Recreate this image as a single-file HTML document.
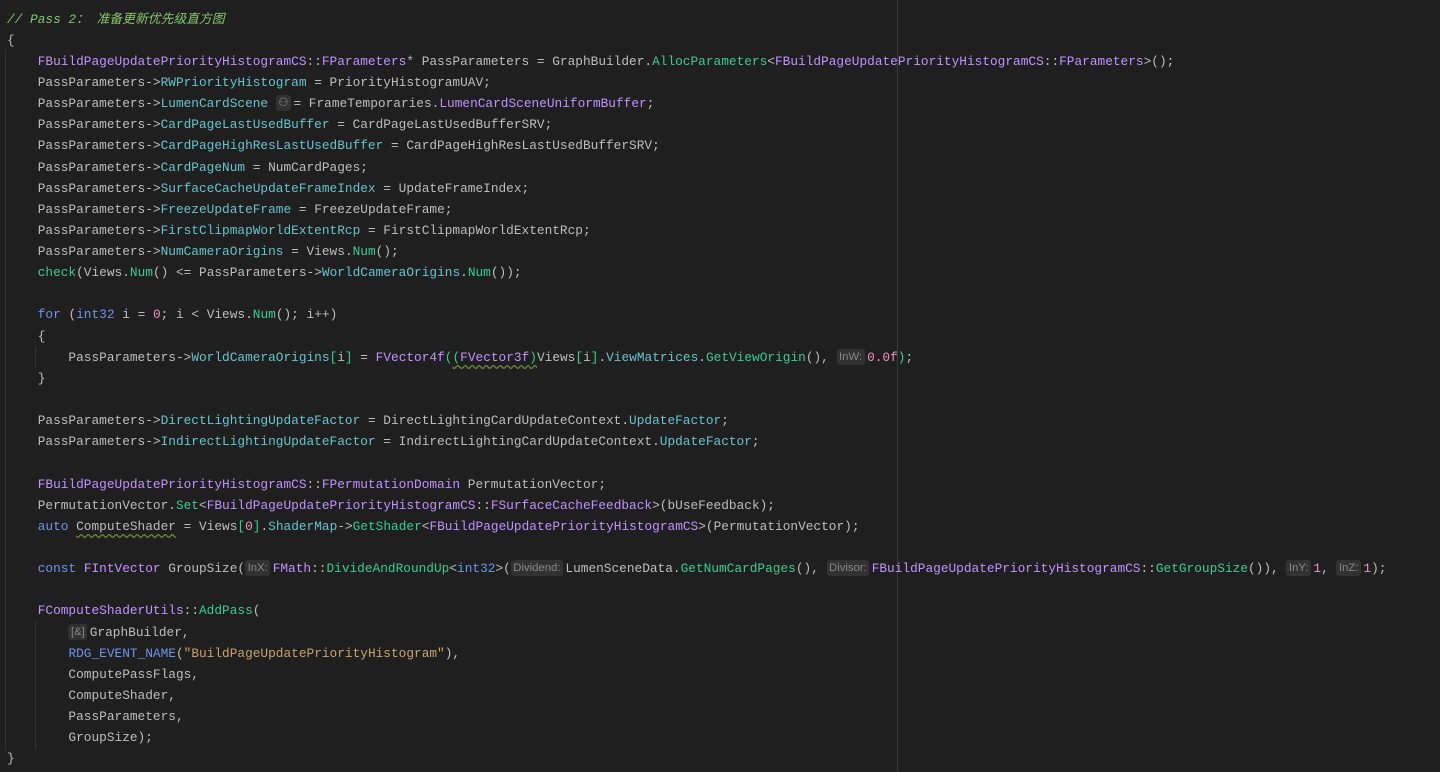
<!DOCTYPE html>
<html><head><meta charset="utf-8">
<style>
html,body{margin:0;padding:0;background:#1f1f1f;width:1440px;height:772px;overflow:hidden}
.ln{position:absolute;left:7px;height:21px;line-height:21px;white-space:pre;font-family:"Liberation Mono","Noto Sans CJK SC",monospace;font-size:12.8px;color:#bdbdbd}
.t{color:#c191ff}.f{color:#66c3cc}.m{color:#39cc8f}.k{color:#6c95eb}.n{color:#ed94c0}
.c{color:#85c46c;font-style:italic}.s{color:#c9a26d}
.h{display:inline-block;background:#323232;color:#888;font-family:"Liberation Sans",sans-serif;font-size:11.3px;line-height:16px;padding:0 2.5px;border-radius:3px;margin-right:2.5px;vertical-align:1px}
.u{text-decoration:underline wavy #6a8a3a;text-underline-offset:3px}
.g{position:absolute;width:1px;background:#333}
</style></head><body>
<div class="g" style="left:897px;top:0;height:772px;background:#3a3a3a"></div>
<div class="g" style="left:5px;top:50px;height:700px"></div>
<div class="g" style="left:35px;top:346px;height:22px"></div>
<div class="g" style="left:35px;top:622px;height:128px"></div>

<div class="ln" style="top:9px"><span class="c">// Pass 2： 准备更新优先级直方图</span></div>
<div class="ln" style="top:30px">{</div>
<div class="ln" style="top:51px">    <span class="t">FBuildPageUpdatePriorityHistogramCS</span>::<span class="t">FParameters</span>* PassParameters = GraphBuilder.<span class="m">AllocParameters</span>&lt;<span class="t">FBuildPageUpdatePriorityHistogramCS</span>::<span class="t">FParameters</span>&gt;();</div>
<div class="ln" style="top:72px">    PassParameters-&gt;<span class="f">RWPriorityHistogram</span> = PriorityHistogramUAV;</div>
<div class="ln" style="top:93px">    PassParameters-&gt;<span class="f">LumenCardScene</span> <span class="h">⚇</span>= FrameTemporaries.<span class="t">LumenCardSceneUniformBuffer</span>;</div>
<div class="ln" style="top:114px">    PassParameters-&gt;<span class="f">CardPageLastUsedBuffer</span> = CardPageLastUsedBufferSRV;</div>
<div class="ln" style="top:135px">    PassParameters-&gt;<span class="f">CardPageHighResLastUsedBuffer</span> = CardPageHighResLastUsedBufferSRV;</div>
<div class="ln" style="top:157px">    PassParameters-&gt;<span class="f">CardPageNum</span> = NumCardPages;</div>
<div class="ln" style="top:178px">    PassParameters-&gt;<span class="f">SurfaceCacheUpdateFrameIndex</span> = UpdateFrameIndex;</div>
<div class="ln" style="top:199px">    PassParameters-&gt;<span class="f">FreezeUpdateFrame</span> = FreezeUpdateFrame;</div>
<div class="ln" style="top:220px">    PassParameters-&gt;<span class="f">FirstClipmapWorldExtentRcp</span> = FirstClipmapWorldExtentRcp;</div>
<div class="ln" style="top:241px">    PassParameters-&gt;<span class="f">NumCameraOrigins</span> = Views.<span class="m">Num</span>();</div>
<div class="ln" style="top:262px">    <span class="m">check</span>(Views.<span class="m">Num</span>() &lt;= PassParameters-&gt;<span class="f">WorldCameraOrigins</span>.<span class="m">Num</span>());</div>
<div class="ln" style="top:304px">    <span class="k">for</span> (<span class="k">int32</span> i = <span class="n">0</span>; i &lt; Views.<span class="m">Num</span>(); i++)</div>
<div class="ln" style="top:326px">    {</div>
<div class="ln" style="top:347px">        PassParameters-&gt;<span class="f">WorldCameraOrigins</span><span class="m">[</span>i<span class="m">]</span> = <span class="t">FVector4f</span><span class="m">(</span><span class="u"><span class="m">(</span><span class="t">FVector3f</span><span class="m">)</span></span>Views<span class="m">[</span>i<span class="m">]</span>.<span class="f">ViewMatrices</span>.<span class="m">GetViewOrigin</span>(), <span class="h">InW:</span><span class="n">0.0f</span><span class="m">)</span>;</div>
<div class="ln" style="top:368px">    }</div>
<div class="ln" style="top:410px">    PassParameters-&gt;<span class="f">DirectLightingUpdateFactor</span> = DirectLightingCardUpdateContext.<span class="f">UpdateFactor</span>;</div>
<div class="ln" style="top:431px">    PassParameters-&gt;<span class="f">IndirectLightingUpdateFactor</span> = IndirectLightingCardUpdateContext.<span class="f">UpdateFactor</span>;</div>
<div class="ln" style="top:474px">    <span class="t">FBuildPageUpdatePriorityHistogramCS</span>::<span class="t">FPermutationDomain</span> PermutationVector;</div>
<div class="ln" style="top:495px">    PermutationVector.<span class="m">Set</span>&lt;<span class="t">FBuildPageUpdatePriorityHistogramCS</span>::<span class="t">FSurfaceCacheFeedback</span>&gt;(bUseFeedback);</div>
<div class="ln" style="top:516px">    <span class="k">auto</span> <span class="u">ComputeShader</span> = Views<span class="m">[</span><span class="n">0</span><span class="m">]</span>.<span class="f">ShaderMap</span>-&gt;<span class="m">GetShader</span>&lt;<span class="t">FBuildPageUpdatePriorityHistogramCS</span>&gt;(PermutationVector);</div>
<div class="ln" style="top:558px">    <span class="k">const</span> <span class="t">FIntVector</span> GroupSize(<span class="h">InX:</span><span class="t">FMath</span>::<span class="m">DivideAndRoundUp</span>&lt;<span class="k">int32</span>&gt;(<span class="h">Dividend:</span>LumenSceneData.<span class="m">GetNumCardPages</span>(), <span class="h">Divisor:</span><span class="t">FBuildPageUpdatePriorityHistogramCS</span>::<span class="m">GetGroupSize</span>()), <span class="h">InY:</span><span class="n">1</span>, <span class="h">InZ:</span><span class="n">1</span>);</div>
<div class="ln" style="top:600px">    <span class="t">FComputeShaderUtils</span>::<span class="m">AddPass</span>(</div>
<div class="ln" style="top:622px">        <span class="h">[&amp;]</span>GraphBuilder,</div>
<div class="ln" style="top:643px">        <span class="k">RDG_EVENT_NAME</span>(<span class="s">"BuildPageUpdatePriorityHistogram"</span>),</div>
<div class="ln" style="top:664px">        ComputePassFlags,</div>
<div class="ln" style="top:685px">        ComputeShader,</div>
<div class="ln" style="top:706px">        PassParameters,</div>
<div class="ln" style="top:727px">        GroupSize);</div>
<div class="ln" style="top:748px">}</div>
</body></html>
